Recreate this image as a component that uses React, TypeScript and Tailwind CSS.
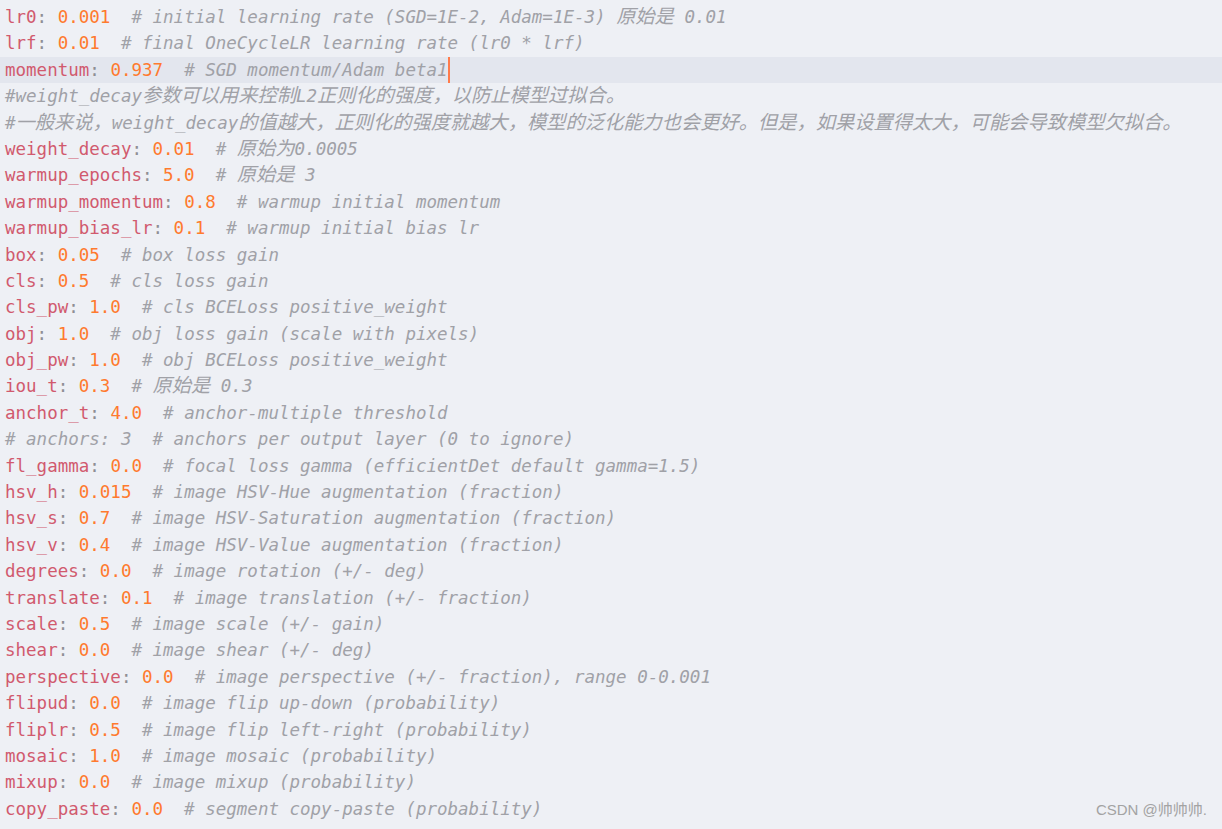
const mono = "font-['DejaVu_Sans_Mono','Liberation_Mono',monospace] text-[17.5px]";

type Line = { key?: string; value?: string; comment: string; full?: boolean; active?: boolean };

const lines: Line[] = [
  { key: "lr0", value: "0.001", comment: "initial learning rate (SGD=1E-2, Adam=1E-3) 原始是 0.01" },
  { key: "lrf", value: "0.01", comment: "final OneCycleLR learning rate (lr0 * lrf)" },
  { key: "momentum", value: "0.937", comment: "SGD momentum/Adam beta1", active: true },
  { full: true, comment: "weight_decay参数可以用来控制L2正则化的强度，以防止模型过拟合。" },
  { full: true, comment: "一般来说，weight_decay的值越大，正则化的强度就越大，模型的泛化能力也会更好。但是，如果设置得太大，可能会导致模型欠拟合。" },
  { key: "weight_decay", value: "0.01", comment: "原始为0.0005" },
  { key: "warmup_epochs", value: "5.0", comment: "原始是 3" },
  { key: "warmup_momentum", value: "0.8", comment: "warmup initial momentum" },
  { key: "warmup_bias_lr", value: "0.1", comment: "warmup initial bias lr" },
  { key: "box", value: "0.05", comment: "box loss gain" },
  { key: "cls", value: "0.5", comment: "cls loss gain" },
  { key: "cls_pw", value: "1.0", comment: "cls BCELoss positive_weight" },
  { key: "obj", value: "1.0", comment: "obj loss gain (scale with pixels)" },
  { key: "obj_pw", value: "1.0", comment: "obj BCELoss positive_weight" },
  { key: "iou_t", value: "0.3", comment: "原始是 0.3" },
  { key: "anchor_t", value: "4.0", comment: "anchor-multiple threshold" },
  { full: true, comment: " anchors: 3  # anchors per output layer (0 to ignore)" },
  { key: "fl_gamma", value: "0.0", comment: "focal loss gamma (efficientDet default gamma=1.5)" },
  { key: "hsv_h", value: "0.015", comment: "image HSV-Hue augmentation (fraction)" },
  { key: "hsv_s", value: "0.7", comment: "image HSV-Saturation augmentation (fraction)" },
  { key: "hsv_v", value: "0.4", comment: "image HSV-Value augmentation (fraction)" },
  { key: "degrees", value: "0.0", comment: "image rotation (+/- deg)" },
  { key: "translate", value: "0.1", comment: "image translation (+/- fraction)" },
  { key: "scale", value: "0.5", comment: "image scale (+/- gain)" },
  { key: "shear", value: "0.0", comment: "image shear (+/- deg)" },
  { key: "perspective", value: "0.0", comment: "image perspective (+/- fraction), range 0-0.001" },
  { key: "flipud", value: "0.0", comment: "image flip up-down (probability)" },
  { key: "fliplr", value: "0.5", comment: "image flip left-right (probability)" },
  { key: "mosaic", value: "1.0", comment: "image mosaic (probability)" },
  { key: "mixup", value: "0.0", comment: "image mixup (probability)" },
  { key: "copy_paste", value: "0.0", comment: "segment copy-paste (probability)" },
];

// split CJK runs out so they can get the wider CJK font
function Mixed({ text }: { text: string }) {
  const parts = text.split(/([\u3000-\u303f\u4e00-\u9fff\uff00-\uffef]+)/);
  return (
    <>
      {parts.map((p, i) =>
        i % 2 === 1 ? (
          <span key={i} className="font-['Noto_Sans_CJK_SC',sans-serif] text-[19.25px] leading-none">
            {p}
          </span>
        ) : (
          <span key={i}>{p}</span>
        )
      )}
    </>
  );
}

export default function App() {
  return (
    <div className={`relative w-[1222px] h-[829px] overflow-hidden bg-[#eef0f5] pt-[4px] ${mono}`}>
      {lines.map((l, i) => (
        <div
          key={i}
          className={`h-[26.4px] leading-[26.4px] whitespace-pre pl-[5px] flex items-center ${l.active ? "bg-[#e3e6ee]" : ""}`}
        >
          {l.full ? (
            <span className="text-[#a0a1a7]">
              #<span className="italic"><Mixed text={l.comment} /></span>
            </span>
          ) : (
            <>
              <span className="text-[#d15a6e]">{l.key}</span>
              <span className="text-[#8e8e94]">: </span>
              <span className="text-[#ff7a2e]">{l.value}</span>
              <span className="text-[#a0a1a7]">
                {"  # "}
                <span className="italic"><Mixed text={l.comment} /></span>
              </span>
              {l.active && <span className="inline-block w-[2px] h-[26px] bg-[#ff7b4b]" />}
            </>
          )}
        </div>
      ))}
      <div className="absolute right-[15px] bottom-[8px] font-['Liberation_Sans','Noto_Sans_CJK_SC',sans-serif] text-[15px] text-[#a3a3a3]">
        CSDN @帅帅帅.
      </div>
    </div>
  );
}
